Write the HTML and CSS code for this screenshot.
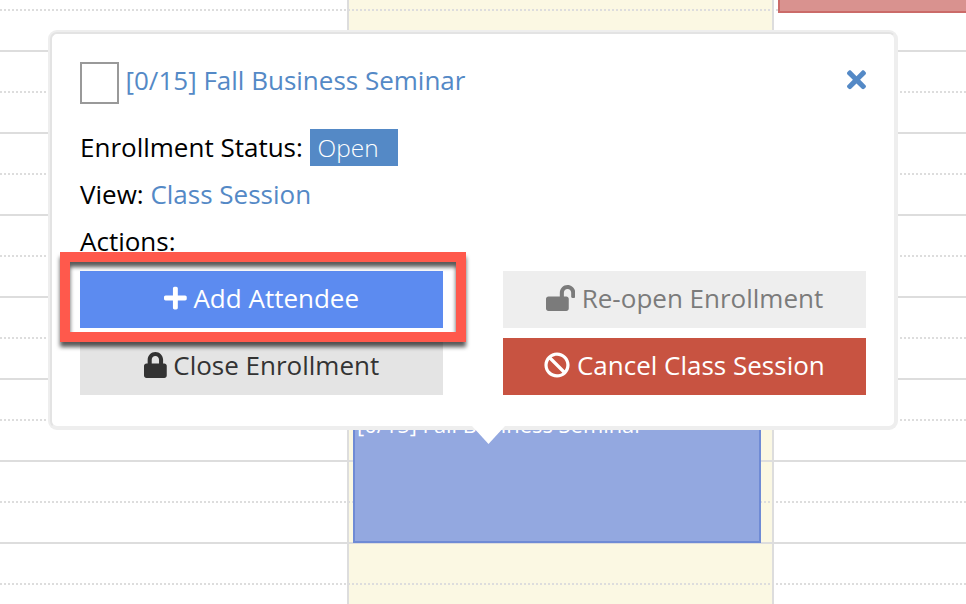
FILE: index.html
```
<!DOCTYPE html>
<html lang="en">
  <head>
    <meta charset="UTF-8" />
    <title>Class Schedule</title>
    <link rel="stylesheet" href="styles.css">
  </head>
  <body>
    <div class="calendar">
      <div class="days">
        <div class="day"></div>
        <div class="day today"></div>
        <div class="day"></div>
      </div>
      <div class="slots">
        <div class="slot half first"></div>
        <div class="slot"></div>
        <div class="slot half"></div>
        <div class="slot"></div>
        <div class="slot half"></div>
        <div class="slot"></div>
        <div class="slot half"></div>
        <div class="slot"></div>
        <div class="slot half"></div>
        <div class="slot"></div>
        <div class="slot half"></div>
        <div class="slot"></div>
        <div class="slot half"></div>
        <div class="slot"></div>
        <div class="slot half"></div>
        <div class="slot"></div>
      </div>
      <div class="event cancelled"></div>
      <div class="event seminar">[0/15] Fall Business Seminar</div>
    </div>

    <div class="popover">
      <div class="popover-header">
        <span class="checkbox"></span>
        <a class="title">[0/15] Fall Business Seminar</a>
        <a class="close">
          <svg class="icon" viewBox="0 0 352 512"><path d="M242.72 256l100.07-100.07c12.28-12.28 12.28-32.19 0-44.48l-22.24-22.24c-12.28-12.28-32.19-12.28-44.48 0L176 189.28 75.93 89.21c-12.28-12.28-32.19-12.28-44.48 0L9.21 111.45c-12.28 12.28-12.28 32.19 0 44.48L109.28 256 9.21 356.07c-12.28 12.28-12.28 32.19 0 44.48l22.24 22.24c12.28 12.28 32.2 12.28 44.48 0L176 322.72l100.07 100.07c12.28 12.28 32.2 12.28 44.48 0l22.24-22.24c12.28-12.28 12.28-32.19 0-44.48L242.72 256z"/></svg>
        </a>
      </div>

      <div class="row">Enrollment Status: <span class="badge">Open</span></div>
      <div class="row">View: <a>Class Session</a></div>
      <div class="row">Actions:</div>

      <div class="actions">
        <div class="btn btn-primary">
          <svg class="icon" viewBox="0 0 448 512"><path d="M416 208H272V64c0-17.67-14.33-32-32-32h-32c-17.67 0-32 14.33-32 32v144H32c-17.67 0-32 14.33-32 32v32c0 17.67 14.33 32 32 32h144v144c0 17.67 14.33 32 32 32h32c17.67 0 32-14.33 32-32V304h144c17.67 0 32-14.33 32-32v-32c0-17.67-14.33-32-32-32z"/></svg>
          Add Attendee
        </div>
        <div class="btn btn-disabled">
          <svg class="icon" viewBox="0 0 576 512"><path d="M423.5 0C339.5.3 272 69.5 272 153.5V224H48c-26.5 0-48 21.5-48 48v192c0 26.5 21.5 48 48 48h352c26.5 0 48-21.5 48-48V272c0-26.5-21.5-48-48-48h-48v-71.1c0-39.6 31.7-72.5 71.3-72.9 40-.4 72.7 32.1 72.7 72v80c0 13.3 10.7 24 24 24h32c13.3 0 24-10.7 24-24v-80C576 68 507.5-.3 423.5 0z"/></svg>
          Re-open Enrollment
        </div>
        <div class="btn btn-default">
          <svg class="icon" viewBox="0 0 448 512"><path d="M400 224h-24v-72C376 68.2 307.8 0 224 0S72 68.2 72 152v72H48c-26.5 0-48 21.5-48 48v192c0 26.5 21.5 48 48 48h352c26.5 0 48-21.5 48-48V272c0-26.5-21.5-48-48-48zm-104 0H152v-72c0-39.7 32.3-72 72-72s72 32.3 72 72v72z"/></svg>
          Close Enrollment
        </div>
        <div class="btn btn-danger">
          <svg class="icon" viewBox="0 0 512 512"><path d="M256 8C119.034 8 8 119.033 8 256s111.034 248 248 248 248-111.034 248-248S392.967 8 256 8zm130.108 117.892c65.448 65.448 70 165.481 20.677 235.637L150.47 105.216c70.204-49.356 170.226-44.735 235.638 20.676zM125.892 386.108c-65.448-65.448-70-165.481-20.677-235.637L361.53 406.784c-70.203 49.356-170.226 44.735-235.638-20.676z"/></svg>
          Cancel Class Session
        </div>
        <div class="highlight"></div>
      </div>
    </div>
  </body>
</html>
```
FILE: styles.css
```
* {
  box-sizing: border-box;
}
body {
  margin: 0;
  height: 604px;
  overflow: hidden;
  position: relative;
  background: #fff;
  font-family: "Open Sans", "Noto Sans", sans-serif;
  font-size: 26px;
  color: #000;
}
a {
  color: #5489c6;
}

/* calendar grid */
.calendar {
  display: grid;
  height: 604px;
  overflow: hidden;
  position: relative;
}
.days,
.slots {
  grid-area: 1 / 1;
}
.days {
  display: grid;
  grid-template-columns: 349px 425px 1fr;
}
.day {
  border-right: 2px solid #ddd;
}
.day:last-child {
  border-right: none;
}
.today {
  background: #fbf8e3;
}
.slot {
  height: 41px;
  border-bottom: 2px solid #ddd;
}
.slot.half {
  border-bottom: none;
  background: repeating-linear-gradient(to right, #ddd 0 2px, transparent 2px 4px) left bottom / 100% 2px no-repeat;
}
.slot.first {
  height: 11px;
}
.event {
  position: absolute;
  border: 2px solid;
}
.seminar {
  left: 353px;
  top: 412px;
  width: 408px;
  height: 131px;
  padding-left: 2px;
  background: #93a8e0;
  border-color: #6f8bd5;
  color: #fff;
  font-size: 21.9px;
  line-height: 22px;
}
.cancelled {
  left: 778px;
  top: -40px;
  width: 200px;
  height: 53px;
  background: #d9928f;
  border-color: #cb6b69;
}

/* popover */
.popover {
  position: absolute;
  left: 50px;
  top: 32px;
  width: 846px;
  height: 396px;
  padding: 28px 28px 0;
  background: #fff;
  border: 2px solid #eee;
  border-top-color: #e3e3e3;
  border-left-color: #e3e3e3;
  border-radius: 7px;
  box-shadow: 0 0 0 2px #eee;
}
.popover::after {
  content: "";
  position: absolute;
  left: 420px;
  top: 392px;
  width: 33px;
  height: 18px;
  background: #fff;
  clip-path: polygon(0 0, 100% 0, 50% 100%);
}
.popover-header {
  display: flex;
  height: 62px;
}
.checkbox {
  width: 39px;
  height: 42px;
  border: 2px solid #999;
}
.title {
  margin-left: 6.5px;
  line-height: 36px;
}
.close {
  margin-left: auto;
  height: 35px;
  font-size: 27.6px;
  line-height: 35px;
}
.row {
  height: 47px;
  line-height: 47px;
}
.badge {
  display: inline-block;
  width: 88px;
  height: 37px;
  padding-left: 8px;
  background: #5489c6;
  color: #fff;
  font-size: 24.4px;
  font-weight: 300;
  line-height: 38px;
}
.icon {
  height: 1em;
  vertical-align: -0.125em;
  fill: currentColor;
}
.actions {
  display: grid;
  grid-template-columns: 1fr 1fr;
  gap: 10px 60px;
  margin-top: 6px;
  position: relative;
}
.btn {
  height: 57px;
  line-height: 55px;
  text-align: center;
}
.btn-primary {
  background: #5c8bf0;
  color: #fff;
}
.btn-disabled {
  background: #eee;
  color: #7b7b7b;
}
.btn-default {
  background: #e4e4e4;
  color: #333;
}
.btn-danger {
  background: #c85341;
  color: #fff;
}

/* callout frame around the add button */
.highlight {
  position: absolute;
  left: -20px;
  top: -19px;
  width: 406px;
  height: 90px;
  border: 10px solid #ff594c;
  filter: drop-shadow(0 5px 2px rgba(0, 0, 0, 0.65));
}
```
